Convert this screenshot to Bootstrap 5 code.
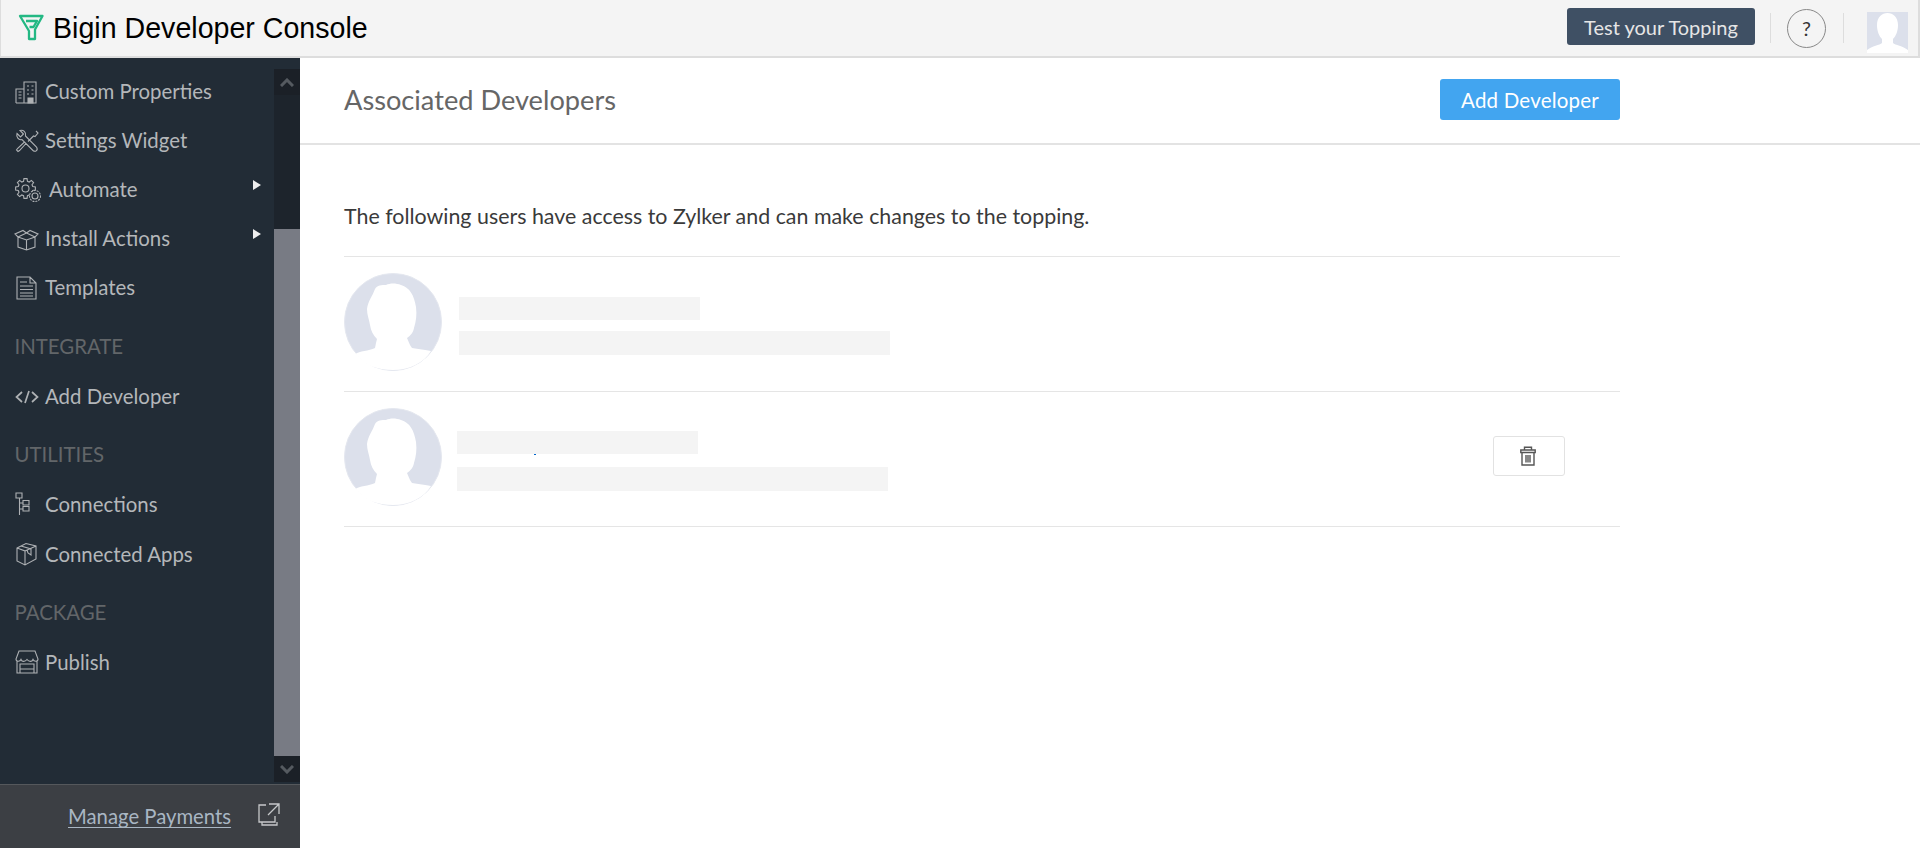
<!DOCTYPE html>
<html lang="en">
<head>
<meta charset="utf-8">
<title>Bigin Developer Console</title>
<link href="https://cdn.jsdelivr.net/npm/bootstrap@5.3.0/dist/css/bootstrap.min.css" rel="stylesheet">
<style>
html,body{height:848px;overflow:hidden;}
body{font-family:Lato,"Liberation Sans",sans-serif;color:#333;background:#fff;}
.app-top{height:58px;background:#f4f4f4;border:solid #ddd;border-width:0 2px 2px 1px;padding-left:17px;}
.app-title{font-family:"Liberation Sans",Arial,sans-serif;font-size:28.6px;color:#000;margin-left:9px;line-height:58px;}
.test-btn{background:#3f5064;color:#e6e6e6;font-size:20px;height:37px;width:188px;padding:0;border:0;border-radius:3px;margin-bottom:3px;}
.test-btn:hover{background:#3f5064;color:#e6e6e6;}
.top-sep{width:1px;height:30px;background:#ddd;margin-bottom:1px;}
.sep-first{margin-left:15px;}
.help-ring{width:39px;height:39px;border:1px solid #888;border-radius:50%;font-size:20px;color:#333;margin:0 17px 0 16px;}
.top-ava{width:41px;height:41px;margin:8px 10px 0 23px;background:#dce0eb;align-self:flex-start;overflow:hidden;}
.app-shell{height:790px;}
.side{width:300px;background:#222c36;flex:none;}
.side-body{height:726px;}
.side-nav{padding:9px 0 0 14.500px;flex:1;}
.side-row{height:49px;color:#b4b7ba;font-size:20.4px;position:relative;}
.side-row.row-tall{height:50px;}
.side-row svg{flex:none;width:24px;height:24px;margin-right:6.500px;fill:none;stroke:#aeb1b4;stroke-width:1.1;}
.side-row svg.gear-ico{width:26px;margin-right:8.500px;}
.side-row svg.box-ico{width:25px;margin-right:6.500px;margin-left:-1px;}
.side-head{height:60px;padding-top:22px;color:#626669;font-size:20.4px;line-height:24px;}
.side-head.h-tight{height:58px;padding-top:21px;}
.side-tri{position:absolute;left:238.500px;top:15px;width:0;height:0;border-left:8px solid #eee;border-top:5.500px solid transparent;border-bottom:5.500px solid transparent;}
.scroll-col{width:26px;margin-top:11px;height:713px;background:#1d242c;}
.scroll-btn{height:26px;background:#1b2027;flex:none;}
.scroll-btn svg{width:14px;height:9px;fill:none;stroke:#555a60;stroke-width:3;}
.scroll-gap{height:134px;flex:none;}
.scroll-thumb{flex:1;background:#787b84;}
.side-foot{height:64px;background:#3c3f44;border-top:1px solid #55585c;padding:0 19px 0 68px;}
.pay-link{color:#a9b6c3;font-size:20.3px;white-space:nowrap;text-decoration:underline;text-underline-offset:3px;text-decoration-thickness:1px;}
.ext-ico{flex:none;width:24px;height:24px;fill:none;stroke:#c6c8ca;stroke-width:1.3;margin-bottom:5px;}
.main-pane{padding-left:44px;width:1376px;}
.main-inner{width:1276px;}
.main-head{height:87px;margin:0 -44px;padding:0 300px 0 44px;border-bottom:2px solid #e3e3e3;width:1620px;}
.main-title{font-size:27.200px;color:#666;font-weight:400;margin:0;}
.add-btn{background:#42a5f0;color:#fff;border:0;border-radius:3px;width:180px;height:41px;padding:2px 0 0;font-size:20.500px;letter-spacing:.2px;margin-top:-3px;}
.add-btn:hover{background:#42a5f0;color:#fff;}
.main-lead{font-size:21.400px;color:#3a3a3a;margin:0;padding-top:58px;height:111px;line-height:26px;}
.dev-row{height:135px;border-top:1px solid #e5e5e5;padding-top:16px;position:relative;}
.dev-ava{width:98px;height:98px;flex:none;}
.dev-body{margin-left:17px;padding-top:24px;}
.dev-body.shifted{margin-left:15px;padding-top:23px;}
.bar-a{width:241px;height:23px;background:#f4f4f4;}
.bar-b{width:431px;height:24px;background:#f4f4f4;margin-top:11px;}
.shifted .bar-b{margin-top:13px;}
.trash-btn{width:72px;height:40px;background:#fff;border:1px solid #e2e2e2;border-radius:3px;padding:0;margin-right:55px;margin-top:28px;}
.trash-btn svg{width:16px;height:20px;fill:none;stroke:#555;stroke-width:1.4;margin:0 2px 2px 0;}
.end-line{border-top:1px solid #e5e5e5;}
.speck{position:absolute;left:190px;top:62px;width:2px;height:1px;background:#06c;}
</style>
</head>
<body>
<header class="app-top d-flex align-items-center">
  <svg width="26" height="28" viewBox="0 0 26 28" fill="none" stroke="#23b883" stroke-width="2.300" stroke-linejoin="round" aria-hidden="true"><path d="M2 2H24.500L17 15.500V25H11V17L2 2Z"/><path d="M8 7H19L15.500 13H11.500"/></svg>
  <span class="app-title">Bigin Developer Console</span>
  <div class="ms-auto d-flex align-items-center">
    <button class="btn test-btn" type="button">Test your Topping</button>
    <span class="top-sep sep-first"></span>
    <span class="help-ring d-flex align-items-center justify-content-center">?</span>
    <span class="top-sep"></span>
    <div class="top-ava">
      <svg viewBox="0 0 41 41" width="41" height="41" aria-hidden="true"><path fill="#fff" d="M0 38C5 34 13 33 15 31V27C12 24 10 19 10 13C10 5 15 1 20.500 1C26 1 31 5 31 13C31 19 29 24 26 27V31C28 33 36 34 41 38V41H0Z"/></svg>
    </div>
  </div>
</header>
<div class="app-shell d-flex">
  <aside class="side d-flex flex-column">
    <div class="side-body d-flex">
      <nav class="side-nav">
        <div class="side-row d-flex align-items-center"><svg viewBox="0 0 24 24"><path d="M1 23V9H9M9 23V2H21V23H1M3.500 12H6.500M3.500 15H6.500M3.500 18H6.500M12 6H14M16.500 6H18.500M12 10H14M16.500 10H18.500M12 14H14M16.500 14H18.500"/><path fill="#aeb1b4" d="M13 18H18V23H13Z"/></svg><span>Custom Properties</span></div>
        <div class="side-row d-flex align-items-center"><svg viewBox="0 0 24 24"><path d="M2 4.500L5.500 8L8.500 5L5 1.500C8 0.500 11.500 3 10.500 7L21.500 18C23.500 21 20.500 23.500 18 21.500L7 10.500C3.500 11.500 1 8 2 4.500ZM21 2L23 4L20 7.500L18.500 7L13 12.500M11 14.500L4.500 21.500L3 22.500L1.500 21L2.500 19.500L9.500 13"/></svg><span>Settings Widget</span></div>
        <div class="side-row d-flex align-items-center"><svg class="gear-ico" viewBox="0 0 26 24"><g transform="translate(10.500 10.500)"><path d="M7.240 -1.940L9.880 -1.560V1.560L7.240 1.940L6.500 3.750L8.090 5.880L5.880 8.090L3.750 6.500L1.940 7.240L1.560 9.880H-1.560L-1.940 7.240L-3.750 6.500L-5.880 8.090L-8.090 5.880L-6.500 3.750L-7.240 1.940L-9.880 1.560V-1.560L-7.240 -1.940L-6.500 -3.750L-8.090 -5.880L-5.880 -8.090L-3.750 -6.500L-1.940 -7.240L-1.560 -9.880H1.560L1.940 -7.240L3.750 -6.500L5.880 -8.090L8.090 -5.880L6.500 -3.750Z"/><circle r="3.500"/></g><circle cx="20" cy="18" r="5.500" fill="#222c36" stroke-dasharray="2 1"/><circle cx="20" cy="18" r="3"/></svg><span>Automate</span><span class="side-tri"></span></div>
        <div class="side-row d-flex align-items-center"><svg class="box-ico" viewBox="0 0 25 24"><path d="M4 10V20L12.500 23L21 20V10M4 10L12.500 13L21 10L24 7L16 3.500L12.500 6L9 3.500L1 7ZM12.500 13V23M12.500 6L21 10M12.500 6L4 10"/></svg><span>Install Actions</span><span class="side-tri"></span></div>
        <div class="side-row d-flex align-items-center"><svg viewBox="0 0 24 24"><path d="M2 1H15L21 7V23H2ZM15 1V7H21M5 6H12M5 10H18M5 13.500H18M5 17H18M5 20H18"/></svg><span>Templates</span></div>
        <div class="side-head">INTEGRATE</div>
        <div class="side-row d-flex align-items-center"><svg viewBox="0 0 24 24" style="stroke-width:1.7"><path d="M7 7L1.500 12L7 17M17 7L22.500 12L17 17M14 6L10 18"/></svg><span>Add Developer</span></div>
        <div class="side-head h-tight">UTILITIES</div>
        <div class="side-row row-tall d-flex align-items-center"><svg viewBox="0 0 24 24"><path d="M1 1H7V6H1ZM4.500 6V23M4.500 11H8M4.500 17H8M8 8.500H14V13H8ZM8 14.500H14V19H8Z"/></svg><span>Connections</span></div>
        <div class="side-row row-tall d-flex align-items-center"><svg viewBox="0 0 24 24"><path d="M2 6L11 1.500L21 4V17L10 23L2 19ZM2 6L10 9V23M10 9L21 4M6 4L16 7V13L13 11L12 8"/></svg><span>Connected Apps</span></div>
        <div class="side-head h-tight">PACKAGE</div>
        <div class="side-row row-tall d-flex align-items-center"><svg viewBox="0 0 24 24"><path d="M4 1H20L23 9C23 12 19 12 18 9.500C17 12 14 12 12 9.500C10 12 7 12 6 9.500C5 12 1 12 1 9ZM2 11V23H22V11M5 14H19V19H5ZM5 19V23M19 19V23"/></svg><span>Publish</span></div>
      </nav>
      <div class="scroll-col d-flex flex-column">
        <div class="scroll-btn d-flex align-items-center justify-content-center"><svg viewBox="0 0 14 9"><path d="M1 8L7 2L13 8"/></svg></div>
        <div class="scroll-gap"></div>
        <div class="scroll-thumb"></div>
        <div class="scroll-btn d-flex align-items-center justify-content-center"><svg viewBox="0 0 14 9"><path d="M1 1L7 7L13 1"/></svg></div>
      </div>
    </div>
    <div class="side-foot d-flex align-items-center">
      <a class="pay-link" href="#">Manage Payments</a>
      <svg class="ext-ico ms-auto" viewBox="0 0 24 24"><path d="M9 3H2V20H18V14M12 2H22V12M22 2L11 13M5 20V23H20V20"/></svg>
    </div>
  </aside>
  <main class="main-pane">
    <div class="main-head d-flex align-items-center justify-content-between">
      <h1 class="main-title">Associated Developers</h1>
      <button class="btn add-btn" type="button">Add Developer</button>
    </div>
    <div class="main-inner">
      <p class="main-lead">The following users have access to Zylker and can make changes to the topping.</p>
      <div class="dev-row d-flex align-items-start">
        <svg class="dev-ava" viewBox="0 0 98 98" aria-hidden="true"><circle cx="49" cy="49" r="48.500" fill="#dce0eb" stroke="#e4e7ef"/><path fill="#fff" d="M11.500 81C15 78 25 78 31 75L32 70L33 66C29 62 27 58 26 52C25 46 23 42 23 36C24 28 28 24 31 16C33 12 38 12 42 12C46 10 52 10 57 12C66 15 70 22 72 34C73 42 72 48 70 55C69 60 67 62 63 65L66 72L68 75C74 76 82 77 87 78C80 90 65 97 49 97C33 97 20 92 11.500 81Z"/></svg>
        <div class="dev-body">
          <div class="bar-a"></div>
          <div class="bar-b"></div>
        </div>
      </div>
      <div class="dev-row d-flex align-items-start">
        <svg class="dev-ava" viewBox="0 0 98 98" aria-hidden="true"><circle cx="49" cy="49" r="48.500" fill="#dce0eb" stroke="#e4e7ef"/><path fill="#fff" d="M11.500 81C15 78 25 78 31 75L32 70L33 66C29 62 27 58 26 52C25 46 23 42 23 36C24 28 28 24 31 16C33 12 38 12 42 12C46 10 52 10 57 12C66 15 70 22 72 34C73 42 72 48 70 55C69 60 67 62 63 65L66 72L68 75C74 76 82 77 87 78C80 90 65 97 49 97C33 97 20 92 11.500 81Z"/></svg>
        <div class="dev-body shifted">
          <div class="bar-a"></div>
          <div class="bar-b"></div>
        </div>
        <span class="speck"></span>
        <button class="btn trash-btn ms-auto" type="button" aria-label="Delete"><svg viewBox="0 0 16 20"><path d="M0.800 4H15.200V6.500H0.800ZM4.500 4V1.200H11.500V4M2 6.500V19H14V6.500M6 9V16.500M8 9V16.500M10 9V16.500"/></svg></button>
      </div>
      <div class="end-line"></div>
    </div>
  </main>
</div>
<script src="https://cdn.jsdelivr.net/npm/bootstrap@5.3.0/dist/js/bootstrap.bundle.min.js"></script>
</body>
</html>
